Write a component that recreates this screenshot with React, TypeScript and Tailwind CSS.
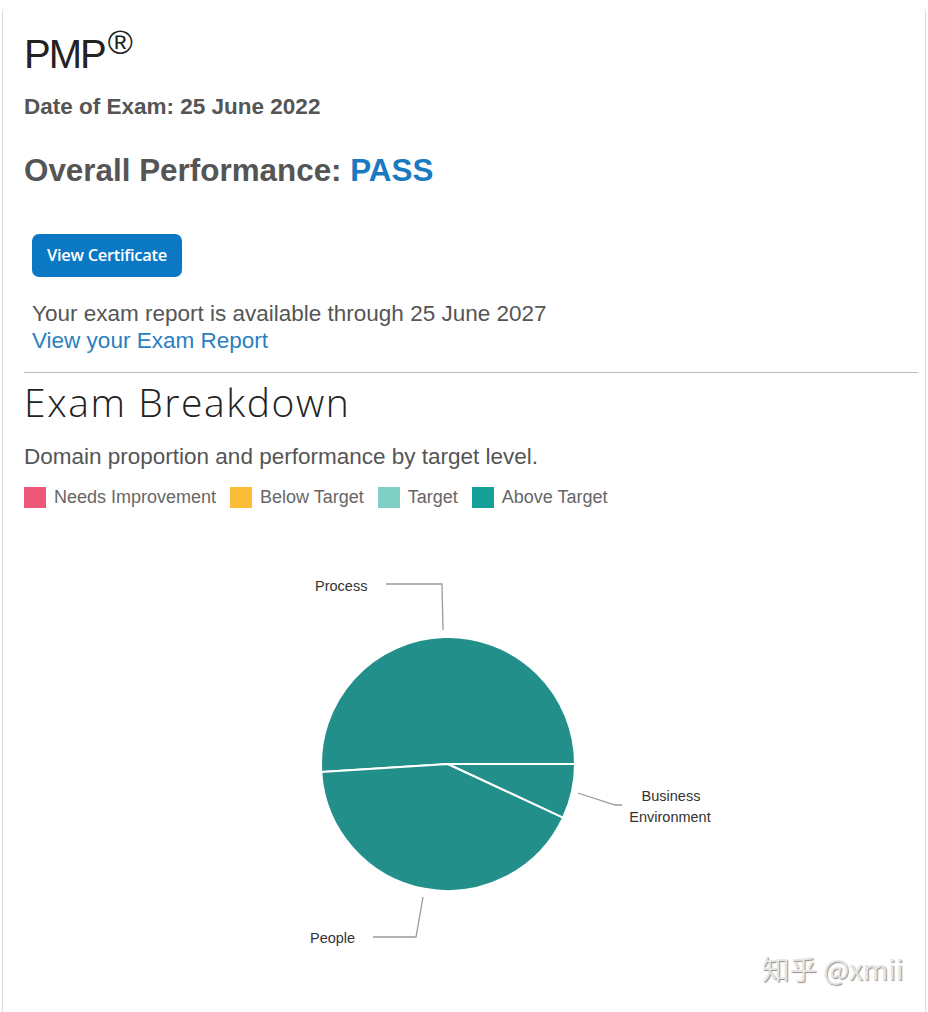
import React from "react";

const legend = [
  { label: "Needs Improvement", color: "bg-[#ee5878]" },
  { label: "Below Target", color: "bg-[#fbbd35]" },
  { label: "Target", color: "bg-[#80cfc4]" },
  { label: "Above Target", color: "bg-[#149f97]" },
];

function DomainPie() {
  // pie centre and radius in page coordinates (viewBox is offset to match)
  const cx = 448;
  const cy = 764;
  const r = 127;
  const pt = (deg: number) => {
    const a = (deg * Math.PI) / 180;
    return `${(cx + r * Math.cos(a)).toFixed(2)},${(cy + r * Math.sin(a)).toFixed(2)}`;
  };
  const business = `M${cx},${cy} L${pt(0)} A${r},${r} 0 0 1 ${pt(25)} Z`;
  const people = `M${cx},${cy} L${pt(25)} A${r},${r} 0 0 1 ${pt(176.4)} Z`;
  const process = `M${cx},${cy} L${pt(176.4)} A${r},${r} 0 1 1 ${pt(360)} Z`;

  return (
    <svg width="900" height="460" viewBox="0 530 900 460" className="block">
      <g fill="#238f8b" stroke="#ffffff" strokeWidth="2" strokeLinejoin="round">
        <path d={process} />
        <path d={people} />
        <path d={business} />
      </g>
      <g fill="none" stroke="#9a9a9a" strokeWidth="1.3">
        <polyline points="386,584 442,584 443,630" />
        <polyline points="578,793 615,805 622,805" />
        <polyline points="373,937 416,937 423,897" />
      </g>
      <g fill="#333333" fontSize="14.5" fontFamily="'Liberation Sans', Arial, sans-serif">
        <text x="315" y="591">Process</text>
        <text x="671" y="801" textAnchor="middle">Business</text>
        <text x="670" y="822" textAnchor="middle">Environment</text>
        <text x="310" y="943">People</text>
      </g>
    </svg>
  );
}

export default function App() {
  return (
    <div className="relative h-[1012px] w-[928px] overflow-hidden bg-white pt-[8px] font-['Liberation_Sans',Arial,sans-serif]">
      <div className="ml-[2px] h-full w-[924px] rounded-t-[4px] border-x border-[#dcdcdc] pl-[21px] pr-[7px] pt-[26px]">
        <h1 className="text-[40px] font-normal leading-none tracking-[-2px] text-[#222]">
          PMP
          <span className="relative -top-[9px] ml-[3px] align-top text-[34px] leading-none tracking-normal">®</span>
        </h1>

        <div className="mt-[22px] text-[22.5px] font-bold leading-none text-[#555]">Date of Exam: 25 June 2022</div>

        <div className="mt-[36px] text-[31.4px] font-bold leading-none text-[#555]">
          Overall Performance: <span className="text-[#1a7abf]">PASS</span>
        </div>

        <button className="ml-[8px] mt-[48px] flex h-[43px] w-[150px] items-center justify-center rounded-[7px] bg-[#0b78c4] font-['Open_Sans',sans-serif] text-[16.5px] font-semibold tracking-[-0.3px] text-white">
          View Certificate
        </button>

        <div className="ml-[8px] mt-[23px] text-[22.5px] leading-[27px] text-[#555]">
          <p>Your exam report is available through 25 June 2027</p>
          <a className="text-[#2a7fc0]">View your Exam Report</a>
        </div>

        <div className="mt-[18px] h-px bg-[#bdbdbd]" />

        <h2 className="mt-[9px] font-['Open_Sans',sans-serif] text-[39px] font-light leading-none tracking-[1.6px] text-[#222]">
          Exam Breakdown
        </h2>

        <p className="mt-[25px] text-[22.5px] leading-none text-[#555]">
          Domain proportion and performance by target level.
        </p>

        <div className="mt-[18px] flex h-[22px] items-center">
          {legend.map((item) => (
            <div key={item.label} className="mr-[14px] flex items-center">
              <span className={`h-[21px] w-[22px] ${item.color}`} />
              <span className="ml-[8px] text-[18px] leading-none text-[#666]">{item.label}</span>
            </div>
          ))}
        </div>

        <div className="-ml-[24px] mt-[22px]">
          <DomainPie />
        </div>
      </div>

      <div className="absolute left-[762px] top-[955px] font-['Noto_Sans_CJK_SC',sans-serif] text-[27.5px] leading-none text-[#e6e6e6] [text-shadow:1px_1px_1px_#8f8f8f]">
        知乎 @xmii
      </div>
    </div>
  );
}
